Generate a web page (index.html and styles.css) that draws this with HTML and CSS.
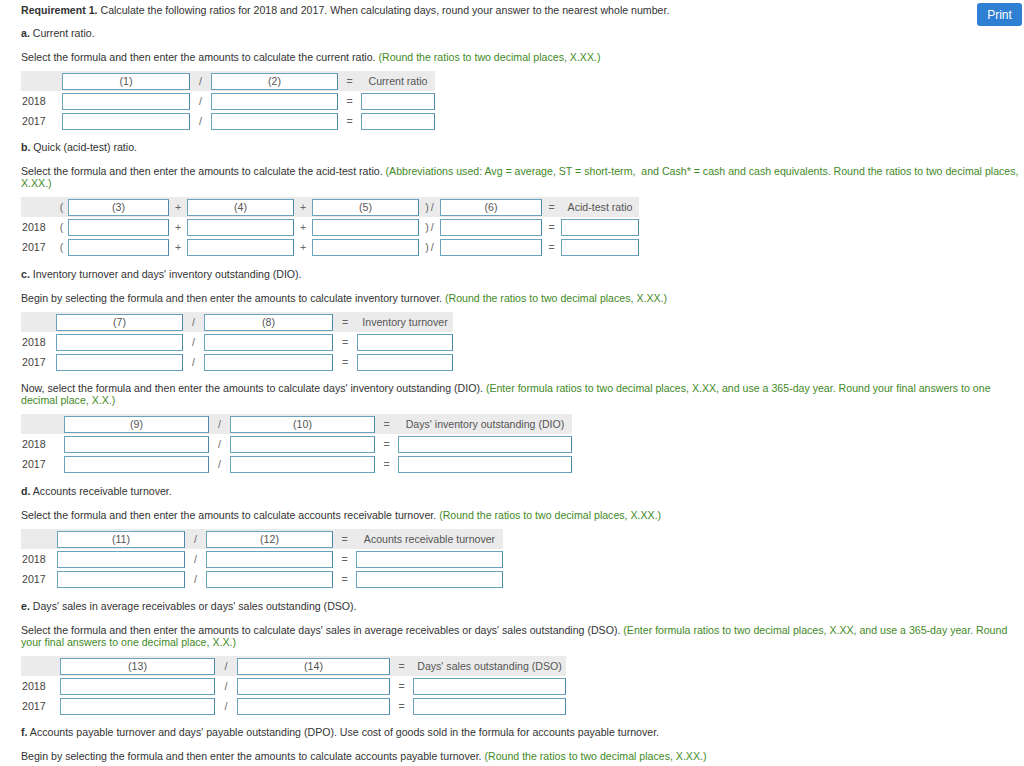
FILE: index.html
```html
<!DOCTYPE html>
<html lang="en">
<head>
    <meta charset="UTF-8">
    <meta name="viewport" content="width=device-width, initial-scale=1.0">
    <title>Requirement 1 - Ratios</title>
    <link rel="stylesheet" href="styles.css">
</head>
<body>
    <div class="page">
        <div class="top">
            <p class="req"><b>Requirement 1.</b> Calculate the following ratios for 2018 and 2017. When calculating days, round your answer to the nearest whole number.</p>
            <button class="print" type="button">Print</button>
        </div>

        <!-- a. current ratio -->
        <p class="part"><b>a.</b> Current ratio.</p>
        <p class="note">Select the formula and then enter the amounts to calculate the current ratio. <span class="hint">(Round the ratios to two decimal places, X.XX.)</span></p>
        <div class="ratio ratio-a">
            <div class="row head">
                <span></span><span class="box">(1)</span><span class="op">/</span><span class="box">(2)</span><span class="op">=</span><span class="label">Current ratio</span>
            </div>
            <div class="row">
                <span class="year">2018</span><input class="box"><span class="op">/</span><input class="box"><span class="op">=</span><input class="box">
            </div>
            <div class="row">
                <span class="year">2017</span><input class="box"><span class="op">/</span><input class="box"><span class="op">=</span><input class="box">
            </div>
        </div>

        <!-- b. quick ratio -->
        <p class="part"><b>b.</b> Quick (acid-test) ratio.</p>
        <p class="note">Select the formula and then enter the amounts to calculate the acid-test ratio. <span class="hint">(Abbreviations used: Avg = average, ST = short-term,&nbsp; and Cash* = cash and cash equivalents. Round the ratios to two decimal places, X.XX.)</span></p>
        <div class="ratio ratio-b">
            <div class="row head">
                <span></span><span class="op">(</span><span class="box">(3)</span><span class="op">+</span><span class="box">(4)</span><span class="op">+</span><span class="box">(5)</span><span class="op">)&thinsp;/</span><span class="box">(6)</span><span class="op">=</span><span class="label">Acid-test ratio</span>
            </div>
            <div class="row">
                <span class="year">2018</span><span class="op">(</span><input class="box"><span class="op">+</span><input class="box"><span class="op">+</span><input class="box"><span class="op">)&thinsp;/</span><input class="box"><span class="op">=</span><input class="box">
            </div>
            <div class="row">
                <span class="year">2017</span><span class="op">(</span><input class="box"><span class="op">+</span><input class="box"><span class="op">+</span><input class="box"><span class="op">)&thinsp;/</span><input class="box"><span class="op">=</span><input class="box">
            </div>
        </div>

        <!-- c. inventory turnover / DIO -->
        <p class="part"><b>c.</b> Inventory turnover and days' inventory outstanding (DIO).</p>
        <p class="note">Begin by selecting the formula and then enter the amounts to calculate inventory turnover. <span class="hint">(Round the ratios to two decimal places, X.XX.)</span></p>
        <div class="ratio ratio-c">
            <div class="row head">
                <span></span><span class="box">(7)</span><span class="op">/</span><span class="box">(8)</span><span class="op">=</span><span class="label">Inventory turnover</span>
            </div>
            <div class="row">
                <span class="year">2018</span><input class="box"><span class="op">/</span><input class="box"><span class="op">=</span><input class="box">
            </div>
            <div class="row">
                <span class="year">2017</span><input class="box"><span class="op">/</span><input class="box"><span class="op">=</span><input class="box">
            </div>
        </div>

        <p class="note">Now, select the formula and then enter the amounts to calculate days' inventory outstanding (DIO). <span class="hint">(Enter formula ratios to two decimal places, X.XX, and use a 365-day year. Round your final answers to one decimal place, X.X.)</span></p>
        <div class="ratio ratio-dio">
            <div class="row head">
                <span></span><span class="box">(9)</span><span class="op">/</span><span class="box">(10)</span><span class="op">=</span><span class="label">Days' inventory outstanding (DIO)</span>
            </div>
            <div class="row">
                <span class="year">2018</span><input class="box"><span class="op">/</span><input class="box"><span class="op">=</span><input class="box">
            </div>
            <div class="row">
                <span class="year">2017</span><input class="box"><span class="op">/</span><input class="box"><span class="op">=</span><input class="box">
            </div>
        </div>

        <!-- d. receivable turnover -->
        <p class="part"><b>d.</b> Accounts receivable turnover.</p>
        <p class="note">Select the formula and then enter the amounts to calculate accounts receivable turnover. <span class="hint">(Round the ratios to two decimal places, X.XX.)</span></p>
        <div class="ratio ratio-d">
            <div class="row head">
                <span></span><span class="box">(11)</span><span class="op">/</span><span class="box">(12)</span><span class="op">=</span><span class="label">Acounts receivable turnover</span>
            </div>
            <div class="row">
                <span class="year">2018</span><input class="box"><span class="op">/</span><input class="box"><span class="op">=</span><input class="box">
            </div>
            <div class="row">
                <span class="year">2017</span><input class="box"><span class="op">/</span><input class="box"><span class="op">=</span><input class="box">
            </div>
        </div>

        <!-- e. DSO -->
        <p class="part"><b>e.</b> Days' sales in average receivables or days' sales outstanding (DSO).</p>
        <p class="note">Select the formula and then enter the amounts to calculate days' sales in average receivables or days' sales outstanding (DSO). <span class="hint">(Enter formula ratios to two decimal places, X.XX, and use a 365-day year. Round your final answers to one decimal place, X.X.)</span></p>
        <div class="ratio ratio-e">
            <div class="row head">
                <span></span><span class="box">(13)</span><span class="op">/</span><span class="box">(14)</span><span class="op">=</span><span class="label">Days' sales outstanding (DSO)</span>
            </div>
            <div class="row">
                <span class="year">2018</span><input class="box"><span class="op">/</span><input class="box"><span class="op">=</span><input class="box">
            </div>
            <div class="row">
                <span class="year">2017</span><input class="box"><span class="op">/</span><input class="box"><span class="op">=</span><input class="box">
            </div>
        </div>

        <!-- f. payable turnover -->
        <p class="part"><b>f.</b> Accounts payable turnover and days' payable outstanding (DPO). Use cost of goods sold in the formula for accounts payable turnover.</p>
        <p class="note">Begin by selecting the formula and then enter the amounts to calculate accounts payable turnover. <span class="hint">(Round the ratios to two decimal places, X.XX.)</span></p>
    </div>
</body>
</html>
```

FILE: styles.css
```css
* {
    margin: 0;
    padding: 0;
    box-sizing: border-box;
}
body, html {
    background-color: #fff;
    font-family: "Liberation Sans", Arial, sans-serif;
    font-size: 10.6px;
    color: #333;
}
.page {
    padding: 3px 2px 0 21px;
}
p {
    line-height: 12px;
}
.top {
    display: flex;
    justify-content: space-between;
    align-items: flex-start;
    margin-bottom: 1px;
}
.req {
    padding-top: 1px;
}
.print {
    width: 45px;
    height: 23px;
    background-color: #2f7fd3;
    color: white;
    border: none;
    border-radius: 3px;
    font-family: inherit;
    font-size: 12px;
    cursor: pointer;
}
.part {
    margin-bottom: 12px;
}
.note {
    margin-bottom: 8px;
}
.hint {
    color: #3f8a26;
}

/* formula grids */
.ratio {
    width: max-content;
    margin-bottom: 10px;
}
.row {
    display: grid;
    grid-template-columns: var(--cols);
    height: 20px;
    align-items: center;
}
.row.head {
    background-color: #ebebeb;
}
.ratio-a { --cols: 41px 128px 21px 127px 23px 74px; }
.ratio-b { --cols: 34px 13px 101px 18px 107px 18px 107px 21px 102px 19px 78px; margin-bottom: 11px; }
.ratio-c { --cols: 35px 127px 21px 129px 24px 96px; }
.ratio-dio { --cols: 43px 145px 21px 145px 23px 174px; margin-bottom: 11px; }
.ratio-d { --cols: 36px 128px 21px 127px 23px 147px; margin-bottom: 11px; }
.ratio-e { --cols: 39px 155px 22px 153px 23px 153px; }

.box {
    display: block;
    width: 100%;
    height: 17px;
    border: 1px solid #6aa3bd;
    border-right-color: #4a8aa8;
    background: #fff;
    font-family: inherit;
    font-size: 10.6px;
    color: #555;
    text-align: center;
    line-height: 15px;
    outline: none;
}
.op {
    text-align: center;
    color: #666;
}
.year {
    padding-left: 1px;
    color: #444;
}
.label {
    text-align: center;
    color: #555;
    white-space: nowrap;
}
```
